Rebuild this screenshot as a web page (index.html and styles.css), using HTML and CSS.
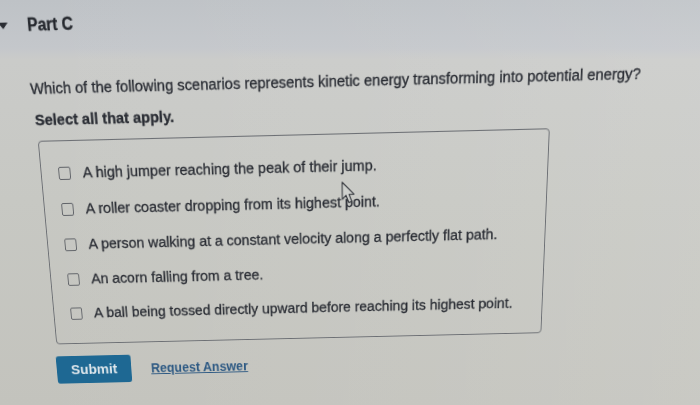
FILE: index.html
```
<!DOCTYPE html>
<html lang="en">
<head>
<meta charset="utf-8">
<title>Part C</title>
<link rel="stylesheet" href="styles.css">
</head>
<body>
<div class="screen">
  <div class="part-head">
    <span class="caret"></span>
    <span class="part-title">Part C</span>
  </div>
  <p class="question">Which of the following scenarios represents kinetic energy transforming into potential energy?</p>
  <p class="instr">Select all that apply.</p>
  <div class="choices">
    <label class="choice"><span class="box"></span><span class="txt">A high jumper reaching the peak of their jump.</span></label>
    <label class="choice"><span class="box"></span><span class="txt">A roller coaster dropping from its highest point.</span></label>
    <label class="choice"><span class="box"></span><span class="txt">A person walking at a constant velocity along a perfectly flat path.</span></label>
    <label class="choice"><span class="box"></span><span class="txt">An acorn falling from a tree.</span></label>
    <label class="choice"><span class="box"></span><span class="txt">A ball being tossed directly upward before reaching its highest point.</span></label>
  </div>
  <div class="actions">
    <button class="submit" type="button">Submit</button>
    <a class="request" href="#">Request Answer</a>
  </div>
  <svg class="cursor" width="15" height="23" viewBox="0 0 15 23" aria-hidden="true">
    <path d="M1 1 L1 18 L5 14.2 L8 21.5 L11 20.3 L8.2 13.2 L13.5 13.2 Z" fill="#cfd1cd" stroke="#34373d" stroke-width="1.1" stroke-linejoin="round"/>
  </svg>
</div>
</body>
</html>
```
FILE: styles.css
```
html, body {
  margin: 0;
  padding: 0;
}

body {
  width: 700px;
  height: 405px;
  overflow: hidden;
  font-family: "Liberation Sans", Arial, sans-serif;
  color: #2a2d34;
  background:
    linear-gradient(90deg, rgba(255,255,255,0) 0%, rgba(255,255,255,0.05) 60%, rgba(255,255,255,0.1) 100%),
    linear-gradient(180deg, #bec2c6 0px, #c4c7cb 48px, #cacbc9 60px, #c7c8c3 200px, #c3c3bd 405px);
}

.screen {
  position: relative;
  width: 700px;
  height: 405px;
  box-sizing: border-box;
  padding-top: 15.5px;
  transform-origin: 295px 237px;
  transform: perspective(800px) rotateX(-12deg) rotate(-1.4deg) scale(0.92, 1);
  -webkit-text-stroke: 0.3px currentColor;
}

.part-head {
  display: flex;
  align-items: center;
  height: 20px;
}

.caret {
  width: 0;
  height: 0;
  margin-left: -5px;
  border-left: 5px solid transparent;
  border-right: 5px solid transparent;
  border-top: 6px solid #2a2d33;
}

.part-title {
  margin-left: 20px;
  font-size: 16px;
  font-weight: bold;
  line-height: 20px;
  color: #24272d;
}

.question {
  margin: 39px 0 0;
  padding-left: 22px;
  font-size: 15.4px;
  line-height: 20px;
  white-space: nowrap;
}

.instr {
  margin: 10.5px 0 0;
  padding-left: 24px;
  font-size: 15.4px;
  font-weight: bold;
  line-height: 20px;
  white-space: nowrap;
}

.choices {
  margin: 10.4px 0 0 24.5px;
  width: 542px;
  box-sizing: border-box;
  border: 1px solid #6c6f74;
  border-radius: 4px;
  padding: 13px 0 14px 18px;
}

.choice {
  display: flex;
  align-items: center;
  height: 36px;
  font-size: 15.4px;
  line-height: 20px;
  white-space: nowrap;
}

.box {
  flex: none;
  width: 13px;
  height: 13px;
  box-sizing: border-box;
  border: 1.3px solid #606368;
  border-radius: 2px;
  margin-right: 13.5px;
}

.actions {
  display: flex;
  align-items: center;
  gap: 22px;
  margin: 12.8px 0 0 23px;
}

.submit {
  height: 30px;
  padding: 0 16px;
  border: none;
  border-radius: 3px;
  background: #1e6893;
  color: #dfe7ec;
  font-family: "Liberation Sans", Arial, sans-serif;
  font-size: 15.4px;
  font-weight: bold;
  -webkit-text-stroke: 0;
}

.request {
  font-size: 14px;
  font-weight: bold;
  color: #2d5983;
  text-decoration: underline;
  -webkit-text-stroke: 0;
}

.cursor {
  position: absolute;
  left: 346px;
  top: 182px;
}
```
